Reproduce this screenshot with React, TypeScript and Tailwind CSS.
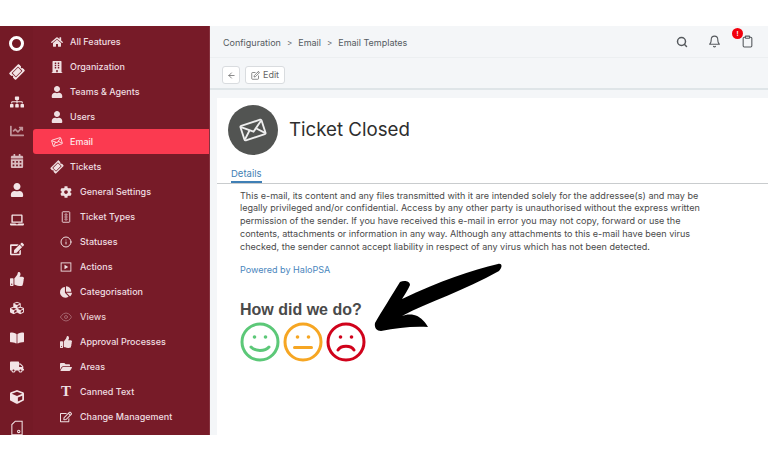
import React from 'react';
import {
  FaHome, FaBuilding, FaUser, FaTicketAlt, FaCog, FaThumbsUp, FaCubes, FaBookOpen, FaTruck, FaCube,
  FaSitemap, FaChartLine, FaCalendarAlt, FaLaptop, FaEdit, FaRegEdit, FaFolderOpen, FaChartPie,
} from 'react-icons/fa';
import { FiInfo, FiEye, FiBell, FiClipboard, FiArrowLeft, FiEdit, FiSearch } from 'react-icons/fi';

const font = { fontFamily: '"Inter", "Open Sans", sans-serif' };

const TiltedTicket = ({ className }: { className?: string }) => (
  <FaTicketAlt className={`${className} -rotate-45`} />
);

const railIcons = [TiltedTicket, FaSitemap, FaChartLine, FaCalendarAlt, FaUser, FaLaptop, FaEdit, FaThumbsUp, FaCubes, FaBookOpen, FaTruck, FaCube];

const EnvelopeIcon = ({ className }: { className?: string }) => (
  <svg viewBox="0 0 24 24" fill="none" stroke="currentColor" strokeWidth="1.6" className={className}>
    <g transform="rotate(-18 12 12)">
      <rect x="2.5" y="5.5" width="19" height="13" rx="1" />
      <path d="M3 6.5l9 7 9-7M3 17.5l6.5-6.5M21 17.5L14.5 11" />
    </g>
  </svg>
);

const TicketTypeIcon = ({ className }: { className?: string }) => (
  <svg viewBox="0 0 16 16" fill="none" stroke="currentColor" strokeWidth="1.2" className={className}>
    <rect x="3" y="1" width="10" height="14" rx="1" />
    <path d="M8 3v10M6 5h1M6 8h1M6 11h1M9 5h1M9 8h1M9 11h1" />
  </svg>
);

const ActionIcon = ({ className }: { className?: string }) => (
  <svg viewBox="0 0 16 16" className={className}>
    <rect x="1.5" y="2.5" width="13" height="11" fill="none" stroke="currentColor" strokeWidth="1.2" />
    <path d="M6 5l5 3-5 3z" fill="currentColor" />
  </svg>
);

const SerifT = ({ className }: { className?: string }) => (
  <span className={className} style={{ fontFamily: '"Liberation Serif", serif' }}>T</span>
);

type MenuItem = { label: string; icon: React.ElementType; sub?: boolean; active?: boolean; dim?: boolean };

const menu: MenuItem[] = [
  { label: 'All Features', icon: FaHome },
  { label: 'Organization', icon: FaBuilding },
  { label: 'Teams & Agents', icon: FaUser },
  { label: 'Users', icon: FaUser },
  { label: 'Email', icon: EnvelopeIcon, active: true },
  { label: 'Tickets', icon: TiltedTicket },
  { label: 'General Settings', icon: FaCog, sub: true },
  { label: 'Ticket Types', icon: TicketTypeIcon, sub: true },
  { label: 'Statuses', icon: FiInfo, sub: true },
  { label: 'Actions', icon: ActionIcon, sub: true },
  { label: 'Categorisation', icon: FaChartPie, sub: true },
  { label: 'Views', icon: FiEye, sub: true, dim: true },
  { label: 'Approval Processes', icon: FaThumbsUp, sub: true },
  { label: 'Areas', icon: FaFolderOpen, sub: true },
  { label: 'Canned Text', icon: SerifT, sub: true },
  { label: 'Change Management', icon: FaRegEdit, sub: true },
];

const Smiley = ({ color, mouth }: { color: string; mouth: string }) => (
  <svg width="40" height="40" viewBox="0 0 40 40" fill="none" stroke={color}>
    <circle cx="20" cy="20" r="18" strokeWidth="3" />
    <circle cx="14.5" cy="15" r="1.8" fill={color} stroke="none" />
    <circle cx="25.5" cy="15" r="1.8" fill={color} stroke="none" />
    <path d={mouth} strokeWidth="3" strokeLinecap="round" />
  </svg>
);

export default function App() {
  return (
    <div className="w-[768px] h-[461px] bg-white overflow-hidden pt-[26px]" style={font}>
      <div className="flex h-[409px] overflow-hidden">
        <aside className="flex w-[210px] shrink-0 bg-[#771b28] border-r border-[#86323e]">
          <div className="w-[33px] shrink-0 bg-[#741a26] flex flex-col items-center overflow-hidden text-[#f3e4e6]">
            <div className="mt-[10px] mb-[14px] w-[15px] h-[15px] shrink-0 rounded-full border-[3px] border-white" />
            <div className="flex flex-col items-center gap-[15.55px]">
              {railIcons.map((Icon, i) => (
                <Icon key={i} className={`w-[14px] h-[14px] shrink-0 ${i === 2 ? 'opacity-60' : i === 3 ? 'opacity-80' : ''}`} />
              ))}
              <svg viewBox="0 0 14 18" className="w-[12px] h-[16px] shrink-0" fill="none" stroke="currentColor" strokeWidth="1.2">
                <path d="M5 1h8v16H1V5z" />
                <circle cx="9" cy="13" r="1.4" />
              </svg>
            </div>
          </div>
          <nav className="flex-1 pt-[3px]">
            {menu.map((item) => (
              <div
                key={item.label}
                className={`flex items-center h-[25px] text-[9px] font-medium ${item.sub ? 'pl-[23px]' : 'pl-[14px]'} ${
                  item.active ? 'bg-[#fb3a50] rounded-l-[3px] text-[#fde8ea]' : item.dim ? 'text-[#e6ccd0]' : 'text-[#efdfe1]'
                }`}
              >
                <span className={`w-[20px] flex justify-center ${item.sub ? 'mr-[4px]' : 'mr-[3px]'} ${item.dim ? 'opacity-40' : ''}`}>
                  <item.icon className={item.label === 'Canned Text' ? 'text-[15px] font-bold leading-none' : 'w-[12px] h-[12px]'} />
                </span>
                <span>{item.label}</span>
              </div>
            ))}
          </nav>
        </aside>

        <main className="flex-1 min-w-0 bg-[#f4f6f8] flex flex-col">
          <header className="h-[32px] shrink-0 flex items-center pl-[13px] border-b border-[#eceff1] text-[9px] text-[#555b61]">
            <div className="flex items-center pt-[3px]">
              <span>Configuration</span>
              <span className="mx-[6px] text-[8px]">&gt;</span>
              <span>Email</span>
              <span className="mx-[6px] text-[8px]">&gt;</span>
              <span>Email Templates</span>
            </div>
            <div className="ml-auto flex items-center gap-[20px] pr-[14px] text-[#55595d]">
              <FiSearch className="w-[12px] h-[12px] [stroke-width:3]" />
              <FiBell className="w-[13px] h-[13px]" />
              <div className="relative">
                <FiClipboard className="w-[13px] h-[13px]" />
                <span className="absolute -top-[7px] -left-[9px] w-[11px] h-[11px] rounded-full bg-[#f2000c] text-white text-[6px] font-bold flex items-center justify-center">!</span>
              </div>
            </div>
          </header>
          <div className="h-[32px] shrink-0 flex items-center gap-[5px] pl-[12px] pt-[4px] border-b-2 border-[#dfe5e8]">
            <button className="w-[18px] h-[18px] flex items-center justify-center bg-white border border-[#d9dcdf] rounded-[3px] text-[#666]">
              <FiArrowLeft className="w-[9px] h-[9px]" />
            </button>
            <button className="h-[18px] px-[5px] flex items-center gap-[3px] bg-white border border-[#d9dcdf] rounded-[3px] text-[9px] text-[#666]">
              <FiEdit className="w-[9px] h-[9px]" />
              Edit
            </button>
          </div>
          <section className="relative flex-1 mt-[8px] ml-[7px] bg-white overflow-hidden">
            <div className="flex items-center gap-[11px] pt-[7px] pl-[11px]">
              <div className="w-[50px] h-[50px] rounded-full bg-[#525452] flex items-center justify-center text-[#eeeeee]">
                <EnvelopeIcon className="w-[28px] h-[28px]" />
              </div>
              <h1 className="text-[18.7px] text-[#2e2e2e] leading-none">Ticket Closed</h1>
            </div>
            <div className="mt-[9px] border-b border-[#c9ccce] h-[20px] pl-[14px] flex items-end">
              <span className="block h-[19px] border-b-2 border-[#3f7fb5] text-[9.5px] text-[#3f7fb5] leading-[20px]">Details</span>
            </div>
            <div className="pl-[23px] pt-[5.5px] text-[9.05px] leading-[12.75px] text-[#4a4a4a] whitespace-nowrap">
              <p>This e-mail, its content and any files transmitted with it are intended solely for the addressee(s) and may be</p>
              <p>legally privileged and/or confidential. Access by any other party is unauthorised without the express written</p>
              <p>permission of the sender. If you have received this e-mail in error you may not copy, forward or use the</p>
              <p>contents, attachments or information in any way. Although any attachments to this e-mail have been virus</p>
              <p>checked, the sender cannot accept liability in respect of any virus which has not been detected.</p>
              <p className="mt-[11px] text-[#4a86bd]">Powered by HaloPSA</p>
            </div>
            <div className="pl-[23px] mt-[22.5px]">
              <h2 className="text-[16px] font-bold leading-[20px] text-[#4a4a4a]" style={{ fontFamily: '"Liberation Sans", sans-serif' }}>How did we do?</h2>
              <div className="flex gap-[3px] mt-[2px]">
                <Smiley color="#5cc878" mouth="M11 25c4 4.5 14 4.5 18 0" />
                <Smiley color="#f6a623" mouth="M11.5 25.5h17" />
                <Smiley color="#d0021b" mouth="M12 28c3-5 13-5 16 0" />
              </div>
            </div>
            <svg className="absolute left-[155px] top-[165px]" width="135" height="75" viewBox="0 0 135 75" fill="#000">
              <path d="M126 1C100 7 68 18 30 36C33 31 36 27 38 22C38 18 32 17 28 19C20 32 10 48 3 60C2 65 5 68 9 68C25 65 40 63 56 64C52 57 47 53 42 52C37 51 33 52 30 53C58 38 92 28 127 8C131 4 130 0 126 1Z" />
            </svg>
          </section>
        </main>
      </div>
    </div>
  );
}
